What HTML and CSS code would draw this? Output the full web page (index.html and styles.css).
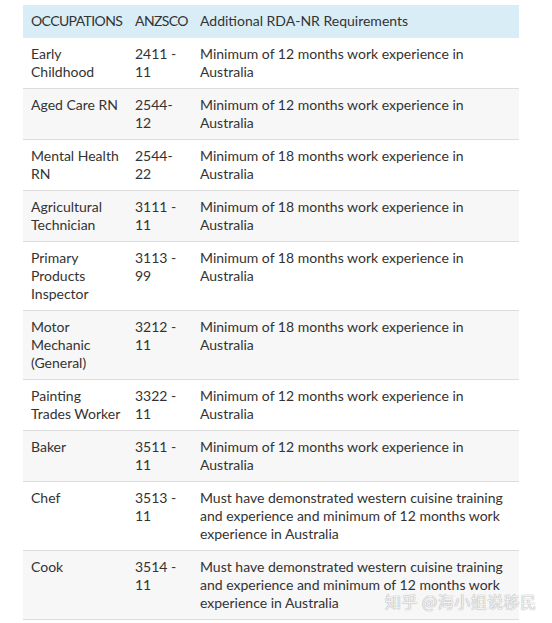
FILE: index.html
```html
<!DOCTYPE html>
<html lang="en">
<head>
  <meta charset="UTF-8" />
  <meta name="viewport" content="width=device-width, initial-scale=1.0" />
  <title>RDA-NR Occupations</title>
  <link rel="stylesheet" href="styles.css">
</head>
<body>
  <div class="page">
    <table class="occ-table">
      <colgroup>
        <col class="col-occ" />
        <col class="col-code" />
        <col class="col-req" />
      </colgroup>
      <thead>
        <tr>
          <th class="caps">OCCUPATIONS</th>
          <th class="caps">ANZSCO</th>
          <th>Additional RDA-NR Requirements</th>
        </tr>
      </thead>
      <tbody>
        <tr>
          <td>Early Childhood</td>
          <td>2411 - 11</td>
          <td>Minimum of 12 months work experience in Australia</td>
        </tr>
        <tr>
          <td>Aged Care RN</td>
          <td>2544-12</td>
          <td>Minimum of 12 months work experience in Australia</td>
        </tr>
        <tr>
          <td>Mental Health RN</td>
          <td>2544-22</td>
          <td>Minimum of 18 months work experience in Australia</td>
        </tr>
        <tr>
          <td>Agricultural Technician</td>
          <td>3111 - 11</td>
          <td>Minimum of 18 months work experience in Australia</td>
        </tr>
        <tr>
          <td>Primary Products Inspector</td>
          <td>3113 - 99</td>
          <td>Minimum of 18 months work experience in Australia</td>
        </tr>
        <tr>
          <td>Motor Mechanic (General)</td>
          <td>3212 - 11</td>
          <td>Minimum of 18 months work experience in Australia</td>
        </tr>
        <tr>
          <td>Painting Trades Worker</td>
          <td>3322 - 11</td>
          <td>Minimum of 12 months work experience in Australia</td>
        </tr>
        <tr>
          <td>Baker</td>
          <td>3511 - 11</td>
          <td>Minimum of 12 months work experience in Australia</td>
        </tr>
        <tr>
          <td>Chef</td>
          <td>3513 - 11</td>
          <td>Must have demonstrated western cuisine training and experience and minimum of 12 months work experience in Australia</td>
        </tr>
        <tr>
          <td>Cook</td>
          <td>3514 - 11</td>
          <td>Must have demonstrated western cuisine training and experience and minimum of 12 months work experience in Australia</td>
        </tr>
      </tbody>
    </table>

    <!-- watermark -->
    <div class="watermark">知乎 @海小姐说移民</div>
  </div>
</body>
</html>
```

FILE: styles.css
```css
body {
  margin: 0;
  background: #ffffff;
  font-family: 'Lato', 'Open Sans', sans-serif;
  color: #333333;
}

.page {
  position: relative;
  padding: 5px 0 0 23px;
  height: 618px;
  overflow: hidden;
}

.occ-table {
  width: 496px;
  border-collapse: collapse;
  table-layout: fixed;
  font-size: 14px;
  line-height: 18px;
}

.col-occ { width: 104px; }
.col-code { width: 65px; }

.occ-table th {
  background: #d9edf7;
  font-weight: normal;
  text-align: left;
  padding: 7px 8px 8px 8px;
  color: #333333;
}

.occ-table th.caps {
  letter-spacing: -0.6px;
}

.occ-table td {
  vertical-align: top;
  padding: 7px 8px 7px 8px;
  border-bottom: 1px solid #dddddd;
}

.occ-table td:first-child {
  padding-right: 5px;
}

.occ-table tbody tr:nth-child(even) td {
  background: #f7f7f7;
}

.watermark {
  position: absolute;
  left: 385px;
  top: 589px;
  font-family: 'Noto Sans CJK SC', sans-serif;
  font-size: 16px;
  letter-spacing: 0.5px;
  color: rgba(255, 255, 255, 0.85);
  text-shadow: 0 0 1px #aaaaaa, 0 0 1px #aaaaaa;
}
```
